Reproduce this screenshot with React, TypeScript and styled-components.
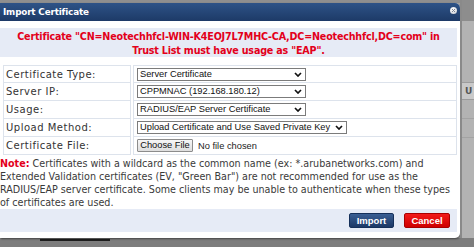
import React from 'react'
import styled, { createGlobalStyle } from 'styled-components'

const GlobalStyle = createGlobalStyle`
  html, body {
    margin: 0;
    padding: 0;
  }
  body {
    width: 474px;
    height: 247px;
    overflow: hidden;
    background: #8a8a8a;
  }
`

const uiFont = `"DejaVu Sans", Verdana, sans-serif`
const ctrlFont = `"Liberation Sans", Arial, sans-serif`

const Screen = styled.div`
  display: flex;
  align-items: flex-start;
  width: 474px;
  height: 247px;
  overflow: hidden;
  background:
    linear-gradient(#1e1e1e, #1e1e1e) 40px 239px / 70px 2px no-repeat,
    linear-gradient(#8f8f8f 0, #8f8f8f 3px, #a9a9a9 3px, #a9a9a9 238px, #7d7d7d 238px);
`

const Dialog = styled.div`
  flex: 0 0 460px;
  height: 235px;
  margin-top: 3px;
  background: #fff;
  border-radius: 0 5px 5px 0;
  box-shadow: 1px 1px 2px rgba(0, 0, 0, 0.45);
  display: flex;
  flex-direction: column;
  overflow: hidden;
`

const TitleBar = styled.div`
  height: 18px;
  flex: 0 0 18px;
  display: flex;
  align-items: center;
  justify-content: space-between;
  padding: 0 2px 0 3px;
  background: linear-gradient(#2e5387, #1d3a67);
  color: #fff;
  font: bold 8.8px ${uiFont};
  letter-spacing: -0.15px;
`

const CloseButton = styled.span`
  width: 7px;
  height: 7px;
  margin-top: -3px;
  margin-right: 1px;
  border-radius: 50%;
  background: radial-gradient(circle at 40% 35%, #ffffff, #c4c8cf);
  display: flex;
  align-items: center;
  justify-content: center;
`

const Body = styled.div`
  padding: 7px 3px 0 0;
  display: flex;
  flex-direction: column;
`

const ErrorBox = styled.div`
  height: 29px;
  box-sizing: border-box;
  padding-top: 2px;
  background: #e6ebf6;
  color: #e3001b;
  text-align: center;
  font: bold 9.6px/13.5px ${uiFont};
  letter-spacing: -0.2px;
  white-space: nowrap;
`

const FormGrid = styled.div`
  margin: 8px 0 0 3px;
  display: grid;
  grid-template-columns: 128px 1fr;
  column-gap: 2px;
  grid-auto-rows: 18px;
`

const Cell = styled.div<{ $first?: boolean }>`
  display: flex;
  align-items: center;
  border: 1px solid #dde3ec;
  border-top-width: ${(p) => (p.$first ? '1px' : '0')};
  box-sizing: border-box;
`

const LabelCell = styled(Cell)`
  padding-left: 2px;
  color: #333;
  font: 10px ${uiFont};
  letter-spacing: 0.5px;
`

const ValueCell = styled(Cell)`
  padding-left: 3px;
  gap: 5px;
  font: 9.3px ${ctrlFont};
  color: #222;
`

const SelectWrap = styled.div<{ $w: number }>`
  position: relative;
  width: ${(p) => p.$w}px;
  height: 13px;
`

const Select = styled.select`
  appearance: none;
  width: 100%;
  height: 100%;
  margin: 0;
  padding: 0 0 0 2px;
  border: 1px solid #7b7b7b;
  border-radius: 0;
  background: #fff;
  color: #111;
  font: 9.3px ${ctrlFont};
  line-height: 11px;
  box-sizing: border-box;
`

const Chevron = styled.svg`
  position: absolute;
  right: 4px;
  top: 4px;
  pointer-events: none;
`

const FileButton = styled.button`
  height: 13px;
  width: 56px;
  margin: 0;
  padding: 0;
  border: 1px solid #8c8c8c;
  border-radius: 1px;
  background: linear-gradient(#f6f6f6, #dedede);
  color: #111;
  font: 9.3px ${ctrlFont};
  line-height: 11px;
`

const Note = styled.p`
  margin: 2px 0 0 0;
  color: #3a3a3a;
  font: 9.6px/13px ${uiFont};
`

const NoteLabel = styled.span`
  color: #e3001b;
  font-weight: bold;
`

const ButtonBar = styled.div`
  height: 23px;
  display: flex;
  align-items: center;
  justify-content: flex-end;
  gap: 10px;
  padding-right: 7px;
  background: #e6ebf6;
`

const ActionButton = styled.button<{ $variant: 'primary' | 'danger' }>`
  height: 15px;
  padding: 0;
  width: ${(p) => (p.$variant === 'primary' ? '45px' : '46px')};
  border: 1px solid ${(p) => (p.$variant === 'primary' ? '#15305a' : '#a80000')};
  border-radius: 2px;
  background: ${(p) =>
    p.$variant === 'primary'
      ? 'linear-gradient(#3a5f93, #1c3866)'
      : 'linear-gradient(#f21a1a, #cf0000)'};
  color: #fff;
  font: bold 9.5px ${ctrlFont};
  line-height: 13px;
`

const SideStrip = styled.div`
  flex: 1;
  display: flex;
  flex-direction: column;
  background: linear-gradient(#8d8d8d 0, #8d8d8d 21px, #b3b3b3 21px);
  border-left: 2px solid #8a8a8a;
  height: 238px;
`

const SideHeader = styled.div`
  margin-top: 82px;
  height: 16px;
  padding-left: 3px;
  background: #c9c9c9;
  border-top: 1px solid #9c9c9c;
  border-bottom: 1px solid #9c9c9c;
  color: #555;
  font: bold 9px/16px ${uiFont};
`

const SideRow = styled.div`
  height: 18px;
  border-bottom: 1px solid #a3a3a3;
`

const ChevronIcon = () => (
  <Chevron width="8" height="5" viewBox="0 0 8 5">
    <path d="M1 1 L4 4 L7 1" fill="none" stroke="#111" strokeWidth="1.7" />
  </Chevron>
)

const Dropdown: React.FC<{ value: string; width: number }> = ({ value, width }) => (
  <SelectWrap $w={width}>
    <Select defaultValue={value}>
      <option>{value}</option>
    </Select>
    <ChevronIcon />
  </SelectWrap>
)

const rows: { label: string; value: string; width: number }[] = [
  { label: 'Certificate Type:', value: 'Server Certificate', width: 169 },
  { label: 'Server IP:', value: 'CPPMNAC (192.168.180.12)', width: 169 },
  { label: 'Usage:', value: 'RADIUS/EAP Server Certificate', width: 169 },
  { label: 'Upload Method:', value: 'Upload Certificate and Use Saved Private Key', width: 210 },
]

export default function App() {
  return (
    <>
      <GlobalStyle />
      <Screen>
        <Dialog>
          <TitleBar>
            <span>Import Certificate</span>
            <CloseButton>
              <svg width="5" height="5" viewBox="0 0 5 5">
                <path d="M1 1 L4 4 M4 1 L1 4" stroke="#7d8595" strokeWidth="1" />
              </svg>
            </CloseButton>
          </TitleBar>
          <Body>
            <ErrorBox>
              Certificate "CN=Neotechhfcl-WIN-K4EOJ7L7MHC-CA,DC=Neotechhfcl,DC=com" in
              <br />
              Trust List must have usage as "EAP".
            </ErrorBox>
            <FormGrid>
              {rows.map((r, i) => (
                <React.Fragment key={r.label}>
                  <LabelCell $first={i === 0}>{r.label}</LabelCell>
                  <ValueCell $first={i === 0}>
                    <Dropdown value={r.value} width={r.width} />
                  </ValueCell>
                </React.Fragment>
              ))}
              <LabelCell>Certificate File:</LabelCell>
              <ValueCell>
                <FileButton>Choose File</FileButton>
                <span>No file chosen</span>
              </ValueCell>
            </FormGrid>
            <Note>
              <NoteLabel>Note:</NoteLabel> Certificates with a wildcard as the common name (ex: *.arubanetworks.com) and
              Extended Validation certificates (EV, "Green Bar") are not recommended for use as the
              RADIUS/EAP server certificate. Some clients may be unable to authenticate when these types of
              certificates are used.
            </Note>
            <ButtonBar>
              <ActionButton $variant="primary">Import</ActionButton>
              <ActionButton $variant="danger">Cancel</ActionButton>
            </ButtonBar>
          </Body>
        </Dialog>
        <SideStrip>
          <SideHeader>U</SideHeader>
          <SideRow />
          <SideRow />
        </SideStrip>
      </Screen>
    </>
  )
}
